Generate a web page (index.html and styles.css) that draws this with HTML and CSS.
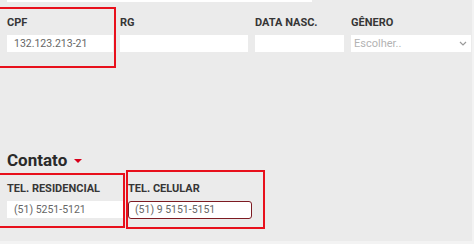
FILE: index.html
```html
<!DOCTYPE html>
<html lang="pt-BR">
<head>
<meta charset="utf-8">
<title>Cadastro</title>
<link rel="stylesheet" href="styles.css">
</head>
<body>
<div class="page">
  <div class="top-strip"></div>
  <div class="row row-pessoal">
    <div class="field hl hl-cpf">
      <label class="label">CPF</label>
      <div class="input">132.123.213-21</div>
    </div>
    <div class="field">
      <label class="label">RG</label>
      <div class="input"></div>
    </div>
    <div class="field">
      <label class="label">DATA NASC.</label>
      <div class="input"></div>
    </div>
    <div class="field">
      <label class="label">GÊNERO</label>
      <div class="input select">
        <span class="placeholder">Escolher..</span>
        <svg class="chev" width="8" height="5" viewBox="0 0 8 5"><path d="M1 1l3 3 3-3" fill="none" stroke="#9a9a9a" stroke-width="1.2"/></svg>
      </div>
    </div>
  </div>

  <h2 class="section-title">Contato<span class="caret"></span></h2>

  <div class="row row-contato">
    <div class="field hl hl-res">
      <label class="label">TEL. RESIDENCIAL</label>
      <div class="input">(51) 5251-5121</div>
    </div>
    <div class="field hl hl-cel">
      <label class="label">TEL. CELULAR</label>
      <div class="input focus">(51) 9 5151-5151</div>
    </div>
  </div>
</div>
</body>
</html>
```

FILE: styles.css
```css
html, body {
  margin: 0;
  padding: 0;
}
body {
  background: #f3f3f3;
  font-family: Roboto, "Liberation Sans", Arial, sans-serif;
  width: 474px;
  height: 244px;
  overflow: hidden;
}
.page {
  width: 472px;
  height: 241px;
  background: #ebebeb;
  overflow: hidden;
}
.top-strip {
  height: 2px;
  width: 305px;
  margin-left: 7px;
  background: #ffffff;
}
.row {
  display: grid;
  column-gap: 7px;
  padding-left: 7px;
}
.row-pessoal {
  grid-template-columns: 106px 128px 89px 120px;
  margin-top: 14px;
}
.row-contato {
  grid-template-columns: 116px 124px;
  column-gap: 5px;
  margin-top: 12px;
}
.field {
  position: relative;
  display: flex;
  flex-direction: column;
}
.label {
  font-size: 11px;
  line-height: 13px;
  font-weight: 700;
  color: #363636;
  margin-bottom: 6px;
  white-space: nowrap;
}
.input {
  height: 17px;
  background: #ffffff;
  box-sizing: border-box;
  padding-left: 7px;
  font-size: 10.5px;
  line-height: 17px;
  color: #666666;
  white-space: nowrap;
}
.input.focus {
  height: 18px;
  border: 1px solid #7d1b22;
  border-radius: 3px;
  padding-left: 6px;
  line-height: 16px;
}
.select {
  display: flex;
  align-items: center;
  justify-content: space-between;
  padding-left: 3px;
  padding-right: 4px;
}
.placeholder {
  color: #b3b3b3;
  font-size: 11px;
}
.section-title {
  margin: 98px 0 0 7px;
  font-size: 17px;
  line-height: 20px;
  font-weight: 700;
  color: #2a2a2a;
  display: flex;
  align-items: center;
}
.caret {
  display: inline-block;
  width: 0;
  height: 0;
  margin-left: 7px;
  margin-top: 2px;
  border-left: 4px solid transparent;
  border-right: 4px solid transparent;
  border-top: 4px solid #d8001a;
}
/* red annotation rectangles drawn over the fields */
.hl::after {
  content: "";
  position: absolute;
  border: 2px solid #e8101c;
  pointer-events: none;
}
.hl-cpf::after {
  top: -9px;
  left: -9px;
  right: -3px;
  bottom: -16px;
}
.hl-res::after {
  top: -9px;
  left: -9px;
  right: -2px;
  bottom: -9px;
}
.hl-cel::after {
  top: -12px;
  left: -2px;
  right: -13px;
  bottom: -10px;
}
```
